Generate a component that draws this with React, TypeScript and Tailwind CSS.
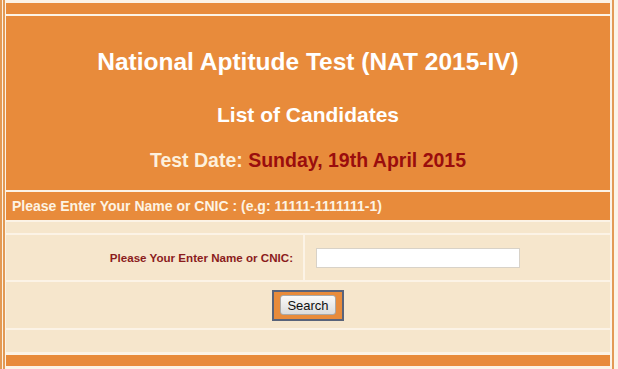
import React from "react";

const ORANGE = "bg-[#e88b3b]";

export default function App() {
  return (
    <div
      className="w-[618px] h-[369px] overflow-hidden bg-[#fcf3e6] flex"
      style={{ fontFamily: '"Liberation Sans", Arial, sans-serif' }}
    >
      {/* left borders */}
      <div className="w-[2px] h-full bg-[#e39a55]" />
      <div className="w-[1px] h-full bg-[#fcf3e6]" />
      <div className="w-[2px] h-full bg-[#e39a55]" />
      <div className="w-[1px] h-full bg-[#fcf3e6]" />
      {/* content */}
      <div className="w-[604px] h-full flex flex-col gap-[2px] bg-[#fcf3e6] pt-[3px]">
        <div className={`h-[11px] ${ORANGE}`} />
        <div className={`h-[174px] ${ORANGE} flex flex-col items-center text-white font-bold`}>
          <div className="mt-[31px] text-[24.5px] leading-[30px]">National Aptitude Test (NAT 2015-IV)</div>
          <div className="mt-[25px] text-[21px] leading-[26px]">List of Candidates</div>
          <div className="mt-[19px] text-[19.5px] leading-[26px]">
            <span className="text-[#fdf0dc]">Test Date: </span>
            <span className="text-[#9a0d0d]">Sunday, 19th April 2015</span>
          </div>
        </div>
        <div className={`h-[28px] ${ORANGE} flex items-center pl-[6px] text-[14px] font-bold text-[#fdf3e3]`}>
          Please Enter Your Name or CNIC : (e.g: 11111-1111111-1)
        </div>
        <div className="h-[11px] bg-[#f6e6cc]" />
        <div className="h-[45px] flex gap-[2px]">
          <div className="w-[297px] bg-[#f6e6cc] flex items-center justify-end pr-[10px] text-[11.6px] font-bold text-[#8b1c1c]">
            Please Your Enter Name or CNIC:
          </div>
          <div className="flex-1 bg-[#f6e6cc] flex items-center pl-[11px]">
            <div className="w-[204px] h-[20px] bg-white border border-[#d8d2c8]" />
          </div>
        </div>
        <div className="h-[46px] bg-[#f6e6cc] flex items-center justify-center">
          <div className="w-[72px] h-[31px] bg-[#e88b3b] border-2 border-[#59637a] flex items-center justify-center">
            <button className="w-[56px] h-[20px] rounded-[3px] border border-[#a9a9a9] bg-gradient-to-b from-[#fafafa] to-[#dcdcdc] text-[13px] text-[#111] leading-none">
              Search
            </button>
          </div>
        </div>
        <div className="h-[22px] bg-[#f6e6cc]" />
        <div className={`h-[11px] mt-[1px] ${ORANGE}`} />
      </div>
      {/* right borders */}
      <div className="w-[2px] h-full bg-[#fcf3e6]" />
      <div className="w-[2px] h-full bg-[#e39a55]" />
    </div>
  );
}
